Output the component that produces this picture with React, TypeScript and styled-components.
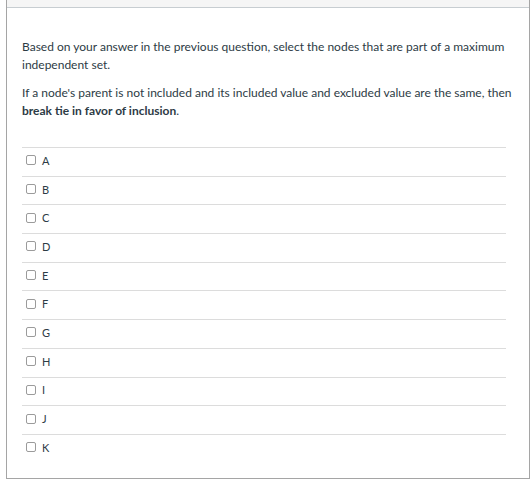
import styled, { createGlobalStyle } from "styled-components";

const GlobalStyle = createGlobalStyle`
  html, body {
    margin: 0;
    padding: 0;
    background: #ffffff;
  }
  body {
    font-family: Lato, "Noto Sans", sans-serif;
    color: #2d3b45;
  }
`;

const Page = styled.div`
  padding: 0 3px 0 6px;
  width: 524px;
`;

const Card = styled.div`
  border: 1px solid #a5a5a5;
  border-top: none;
  background: #ffffff;
`;

const Header = styled.div`
  height: 7px;
  background: #f5f5f5;
  border-bottom: 1px solid #c7cdd1;
`;

const Body = styled.div`
  padding: 30px 23px 15px 15px;
`;

const Text = styled.div`
  font-size: 12px;
  line-height: 18px;
  margin-right: -10px;

  p {
    margin: 0 0 10px;
  }
  p:last-child {
    margin-bottom: 0;
  }
  strong {
    font-weight: 700;
  }
`;

const Answers = styled.div`
  margin-top: 27px;
`;

const Row = styled.label`
  display: flex;
  align-items: center;
  gap: 6px;
  box-sizing: border-box;
  height: 28.7px;
  padding: 0 0 3px 4px;
  border-top: 1px solid #dcdcdc;
  font-size: 11px;
`;

const Box = styled.span`
  display: inline-block;
  width: 8px;
  height: 8px;
  border: 1px solid #9b9b9b;
  border-radius: 2px;
  background: #fff;
`;

const nodes = ["A", "B", "C", "D", "E", "F", "G", "H", "I", "J", "K"];

export default function App() {
  return (
    <>
      <GlobalStyle />
      <Page>
        <Card>
          <Header />
          <Body>
            <Text>
              <p>
                Based on your answer in the previous question, select the nodes
                that are part of a maximum independent set.
              </p>
              <p>
                If a node's parent is not included and its included value and
                excluded value are the same, then{" "}
                <strong>break tie in favor of inclusion</strong>.
              </p>
            </Text>
            <Answers>
              {nodes.map((n) => (
                <Row key={n}>
                  <Box />
                  {n}
                </Row>
              ))}
            </Answers>
          </Body>
        </Card>
      </Page>
    </>
  );
}
